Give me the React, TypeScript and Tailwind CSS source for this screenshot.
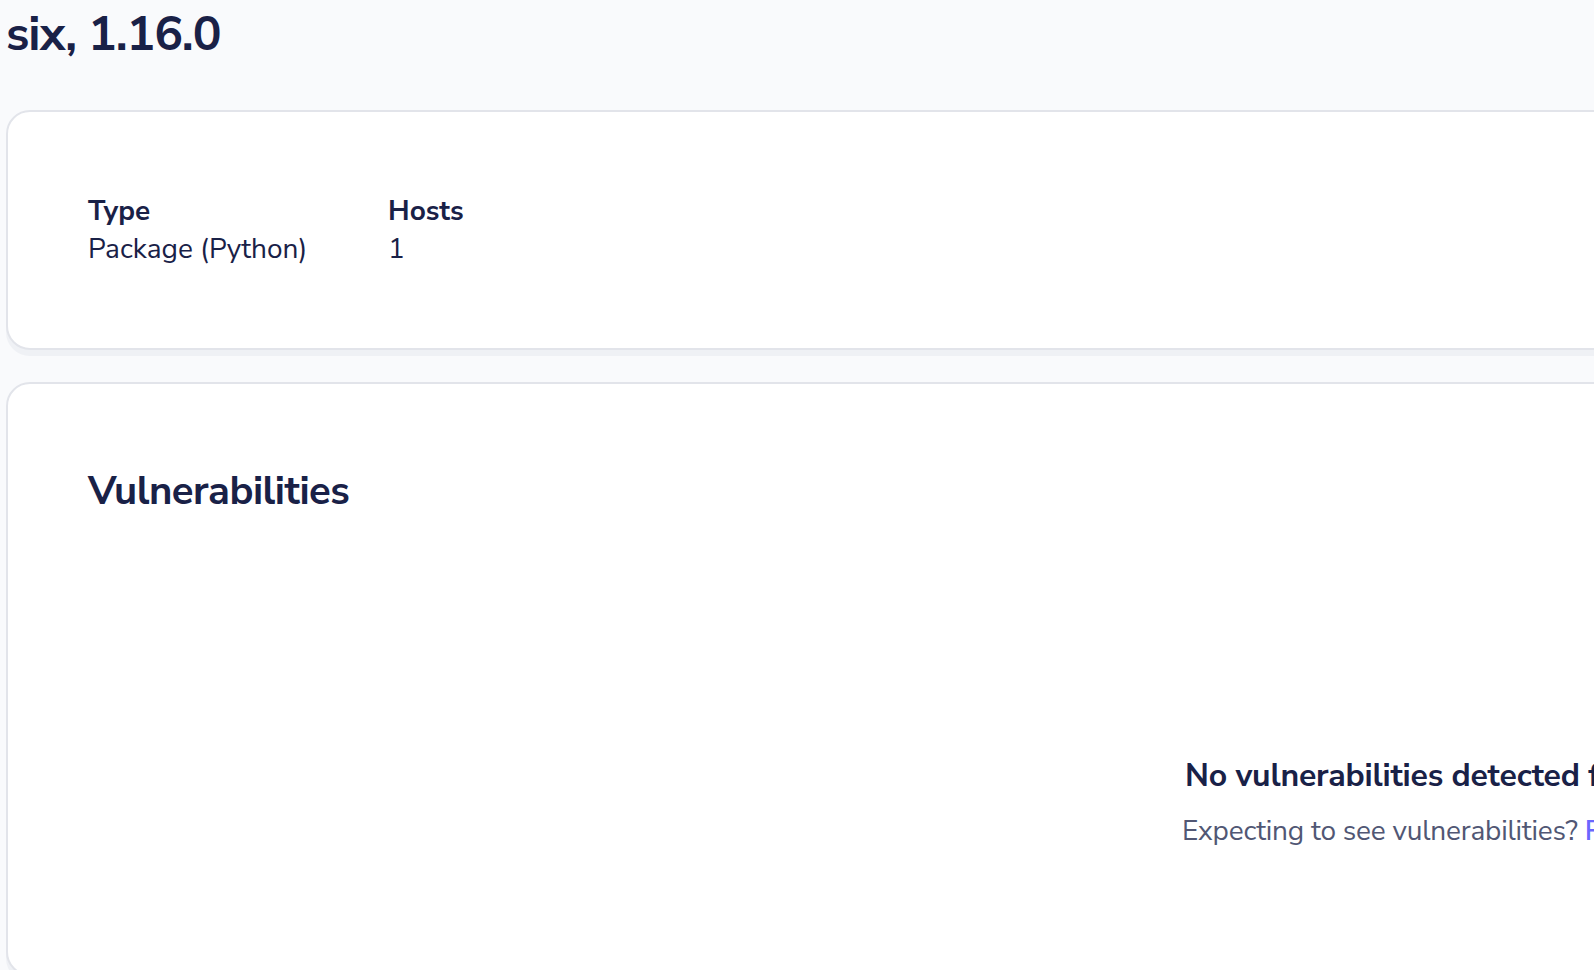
import React from "react";

const font = { fontFamily: '"Nunito Sans", Lato, "Open Sans", sans-serif' };

export default function App() {
  return (
    <div
      className="w-[1594px] h-[970px] overflow-hidden bg-[#f9fafc] text-[#192147] font-['Nunito_Sans',Lato,'Open_Sans',sans-serif]"
      style={font}
    >
      <div className="pl-[6px] flex flex-col">
        <h1 className="pt-[3px] text-[48px] leading-[62px] font-bold tracking-[-1.1px] whitespace-nowrap">
          six, 1.16.0
        </h1>

        <div className="mt-[45px] w-[3190px] shrink-0 rounded-[24px] border-2 border-[#e2e4ea] bg-white shadow-[0_6px_0_rgba(226,228,234,0.4)] pl-[80px] pt-[80px] pb-[80px]">
          <div className="flex">
            <div className="w-[300px] flex flex-col">
              <div className="text-[28px] leading-[38px] font-bold">Type</div>
              <div className="text-[28px] leading-[38px]">Package (Python)</div>
            </div>
            <div className="flex flex-col">
              <div className="text-[28px] leading-[38px] font-bold">Hosts</div>
              <div className="text-[28px] leading-[38px]">1</div>
            </div>
          </div>
        </div>

        <div className="mt-[32px] w-[3190px] h-[594px] shrink-0 rounded-[24px] border-2 border-[#e2e4ea] bg-white shadow-[0_6px_0_rgba(226,228,234,0.4)] pl-[80px] pt-[80px]">
          <h2 className="text-[40px] leading-[54px] font-bold tracking-[-0.5px]">Vulnerabilities</h2>
          <div className="mt-[236px] pl-[1094px] flex flex-col items-start gap-[14px] whitespace-nowrap">
            <div className="pl-[3px] text-[32px] leading-[44px] font-bold tracking-[-0.2px]">
              No vulnerabilities detected for this software item.
            </div>
            <div className="text-[28px] leading-[38px] text-[#515774] tracking-[-0.2px]">
              Expecting to see vulnerabilities?{" "}
              <a className="text-[#6a67fe] font-semibold">File an issue on GitHub</a>
            </div>
          </div>
        </div>
      </div>
    </div>
  );
}
